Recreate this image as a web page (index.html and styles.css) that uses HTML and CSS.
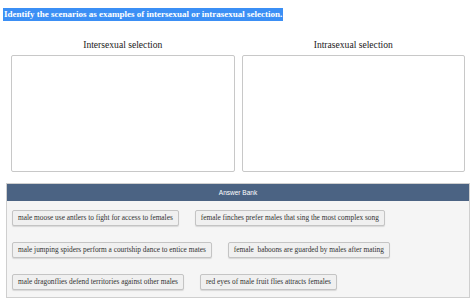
FILE: index.html
```html
<!DOCTYPE html>
<html lang="en">
	<head>
		<meta charset="UTF-8">
		<title>Sorting</title>
		<link rel="stylesheet" href="styles.css">
	</head>
	<body>
		<div class="prompt">
			<span class="prompt-text">Identify the scenarios as examples of intersexual or intrasexual selection.</span>
		</div>
		<div class="zones">
			<div class="zone">
				<div class="zone-title">Intersexual selection</div>
				<div class="zone-box"></div>
			</div>
			<div class="zone">
				<div class="zone-title">Intrasexual selection</div>
				<div class="zone-box"></div>
			</div>
		</div>
		<div class="bank">
			<div class="bank-head">Answer Bank</div>
			<div class="bank-body">
				<div class="bank-row">
					<span class="chip">male moose use antlers to fight for access to females</span>
					<span class="chip">female finches prefer males that sing the most complex song</span>
				</div>
				<div class="bank-row">
					<span class="chip">male jumping spiders perform a courtship dance to entice mates</span>
					<span class="chip">female &nbsp;baboons are guarded by males after mating</span>
				</div>
				<div class="bank-row">
					<span class="chip">male dragonflies defend territories against other males</span>
					<span class="chip">red eyes of male fruit flies attracts females</span>
				</div>
			</div>
		</div>
	</body>
</html>
```

FILE: styles.css
```css
* {
	margin: 0;
	padding: 0;
	box-sizing: border-box;
}

body {
	background-color: #fff;
	font-family: "Liberation Serif", "Times New Roman", serif;
	color: #333;
	width: 474px;
	height: 303px;
	overflow: hidden;
}

.prompt {
	padding: 3px 0 0 3px;
	height: 18px;
}

.prompt-text {
	background-color: #3b8ff5;
	color: #fff;
	font-weight: bold;
	font-size: 9px;
	line-height: 13px;
	display: inline-block;
	padding: 0 1px;
}

.zones {
	display: grid;
	grid-template-columns: 1fr 1fr;
	column-gap: 7px;
	padding: 0 9px 0 11px;
	margin-top: 21px;
}

.zone-title {
	text-align: center;
	font-size: 9.6px;
	line-height: 12px;
	height: 16px;
	color: #222;
}

.zone-box {
	height: 117px;
	border: 1.5px solid #c8c8c8;
	border-radius: 2px;
	background-color: #fff;
}

.bank {
	margin: 11px 4px 0 6px;
	border: 1px solid #cfcfcf;
	background-color: #f5f5f5;
}

.bank-head {
	background-color: #4b6383;
	color: #fff;
	font-family: "Liberation Sans", Arial, sans-serif;
	font-size: 6.5px;
	height: 17px;
	line-height: 17px;
	text-align: center;
}

.bank-body {
	padding: 9px 0 7px 5px;
	display: flex;
	flex-direction: column;
	gap: 16px;
}

.bank-row {
	display: flex;
	gap: 16px;
}

.chip {
	display: inline-block;
	height: 16px;
	line-height: 14px;
	padding: 0 5px;
	font-size: 7.35px;
	color: #333;
	background-color: #f0f0f0;
	border: 1px solid #c4c4c4;
	border-radius: 2px;
	box-shadow: 0 1px 1px rgba(0, 0, 0, 0.12);
	white-space: nowrap;
}
```
